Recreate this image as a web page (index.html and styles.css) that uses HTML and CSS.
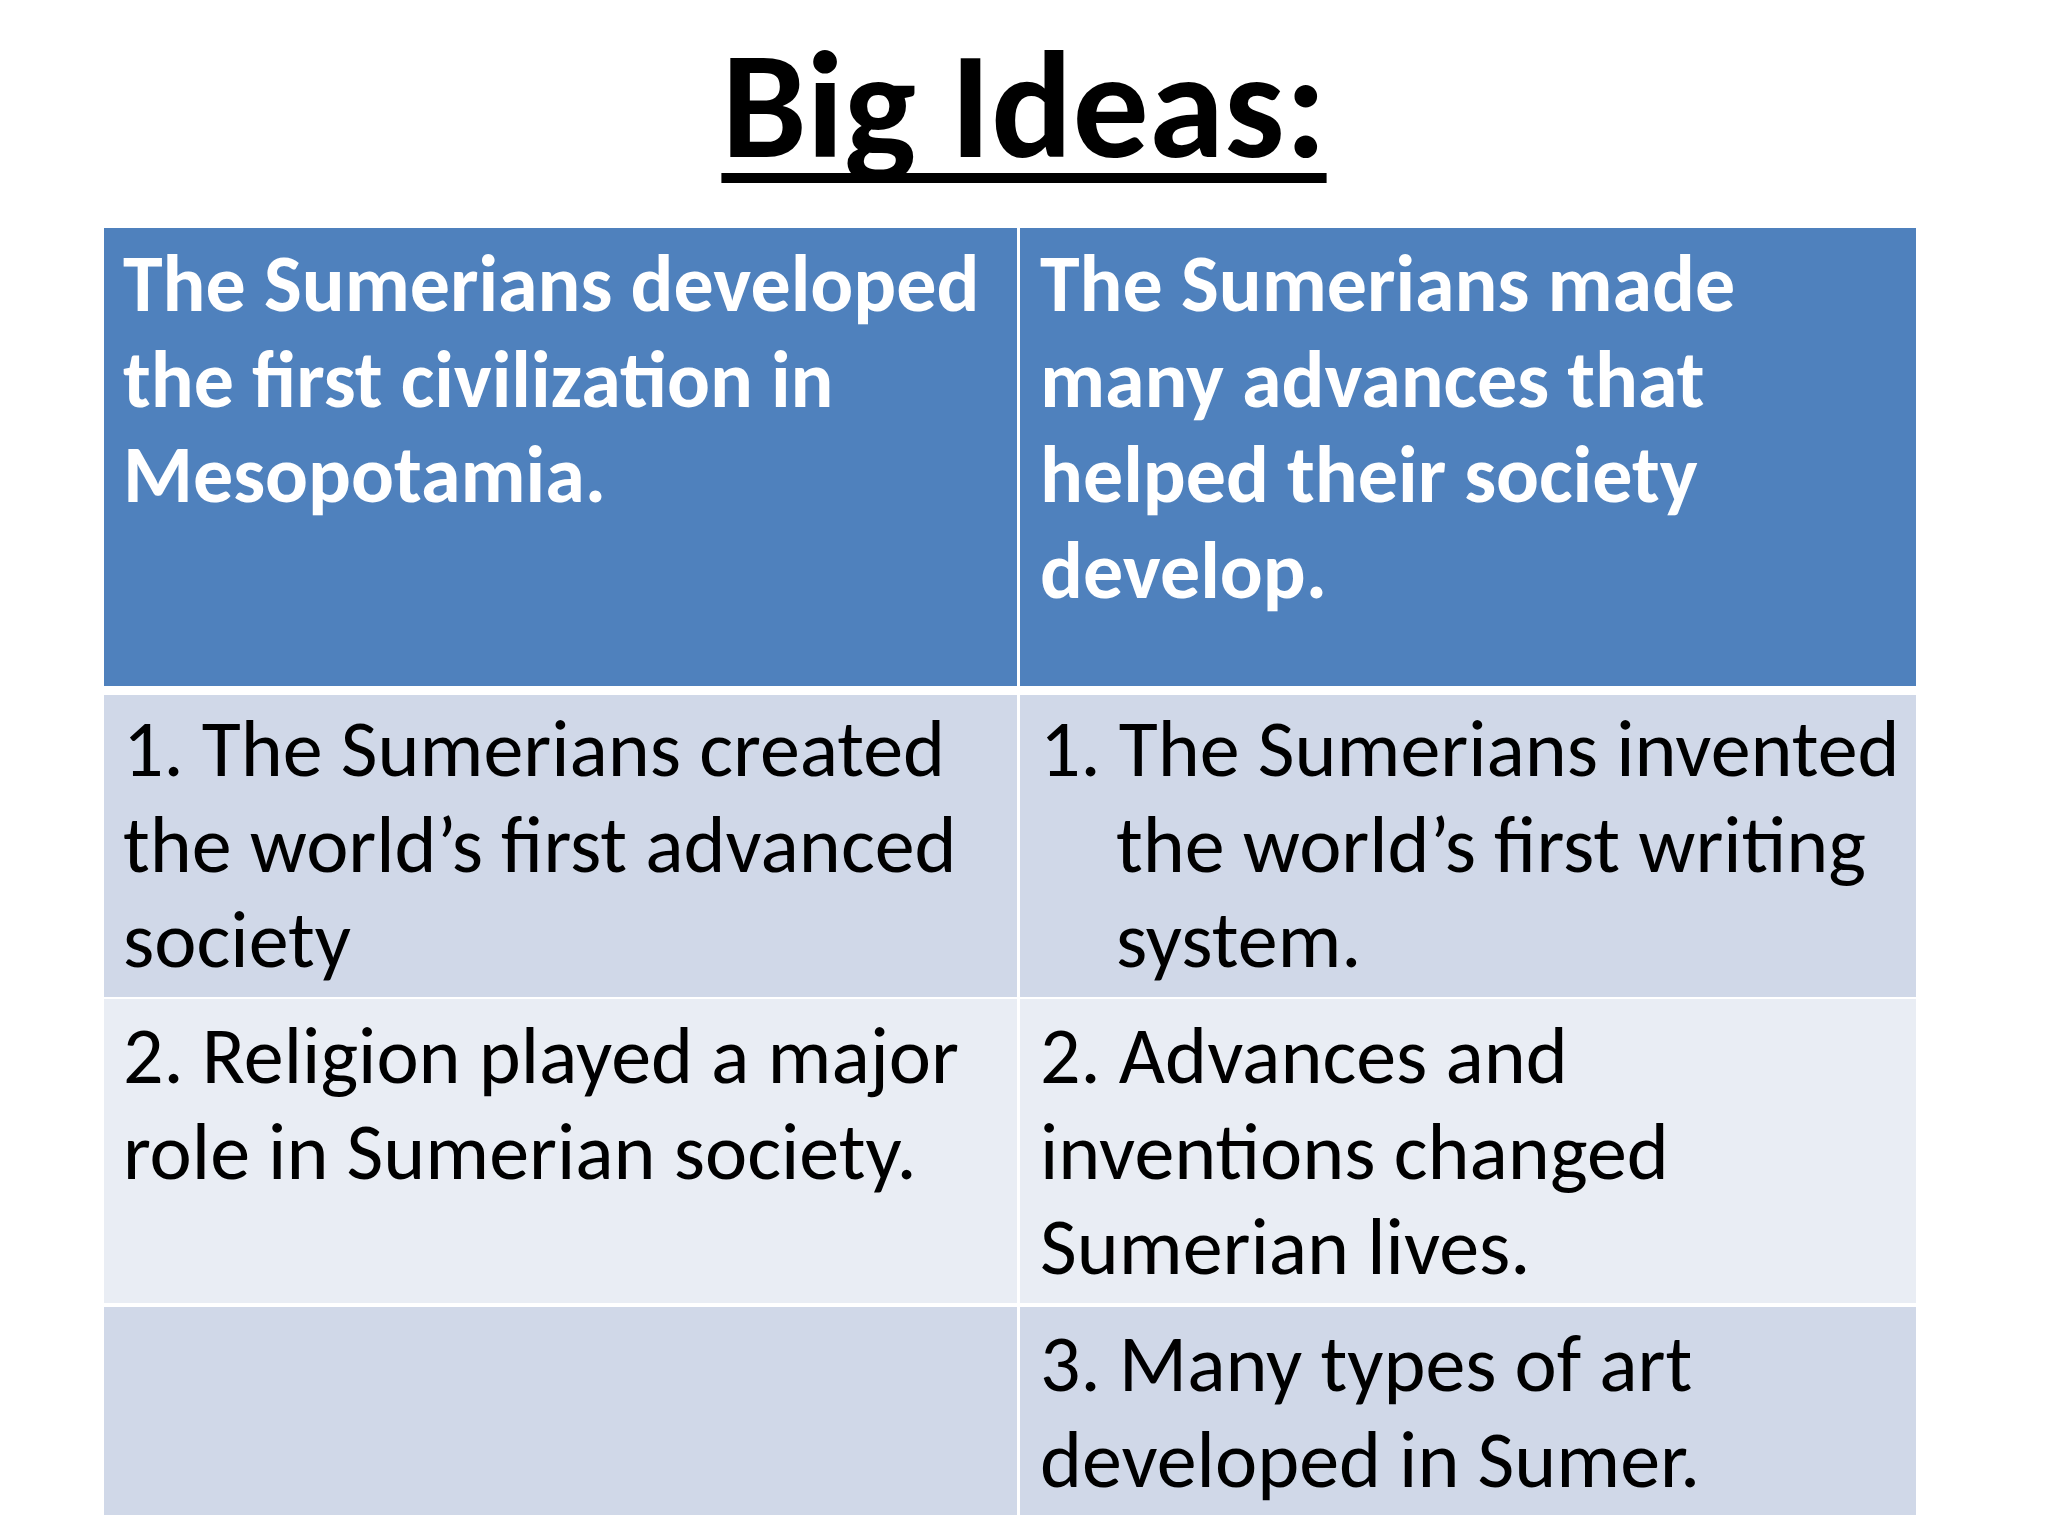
FILE: index.html
```html
<!DOCTYPE html>
<html lang="en">
<head>
<meta charset="utf-8">
<title>Big Ideas</title>
<link rel="stylesheet" href="styles.css">
</head>
<body>
<main class="slide">
  <h1 class="title">Big Ideas:</h1>
  <div class="table">
    <div class="row row-head">
      <div class="cell">The Sumerians developed the first civilization in Mesopotamia.</div>
      <div class="cell">The Sumerians made many advances that helped their society develop.</div>
    </div>
    <div class="row row-1">
      <div class="cell">1. The Sumerians created the world’s first advanced society</div>
      <div class="cell hang">1. The Sumerians invented the world’s first writing system.</div>
    </div>
    <div class="row row-2">
      <div class="cell">2. Religion played a major role in Sumerian society.</div>
      <div class="cell">2. Advances and inventions changed Sumerian lives.</div>
    </div>
    <div class="row row-3">
      <div class="cell"></div>
      <div class="cell">3. Many types of art developed in Sumer.</div>
    </div>
  </div>
</main>
</body>
</html>
```
FILE: styles.css
```css
html, body {
  margin: 0;
  padding: 0;
  background: #ffffff;
}

.slide {
  width: 2048px;
  height: 1536px;
  display: flex;
  flex-direction: column;
  align-items: center;
  font-family: Carlito, Calibri, Lato, sans-serif;
}

.title {
  margin: 29px 0 0 0;
  font-size: 152px;
  line-height: 152px;
  font-weight: 700;
  color: #000000;
  text-decoration: underline;
  text-decoration-thickness: 10px;
  text-underline-offset: 16px;
  text-decoration-skip-ink: none;
}

.table {
  align-self: flex-start;
  margin: 47px 0 0 104px;
  width: 1812px;
  display: flex;
  flex-direction: column;
}

.row {
  display: grid;
  grid-template-columns: 913px 896px;
  column-gap: 3px;
}

.cell {
  font-size: 80px;
  line-height: 95.5px;
  color: #000000;
  padding: 9px 10px 0 20px;
  box-sizing: border-box;
}

.row > .cell:first-child {
  padding-left: 19px;
}

.row-head {
  height: 458px;
}

.row-head .cell {
  background: #4f81bd;
  color: #ffffff;
  font-weight: 700;
  padding-top: 8px;
}

.row-1 {
  margin-top: 9px;
  height: 302px;
}

.row-1 .cell {
  padding-top: 6px;
}

.row-1 .cell,
.row-3 .cell {
  background: #d0d8e8;
}

.row-2 {
  margin-top: 2px;
  height: 304px;
}

.row-2 .cell {
  background: #e9edf4;
}

.row-3 {
  margin-top: 4px;
  height: 208px;
}

.hang {
  padding-left: 96px;
  text-indent: -76px;
}
```
